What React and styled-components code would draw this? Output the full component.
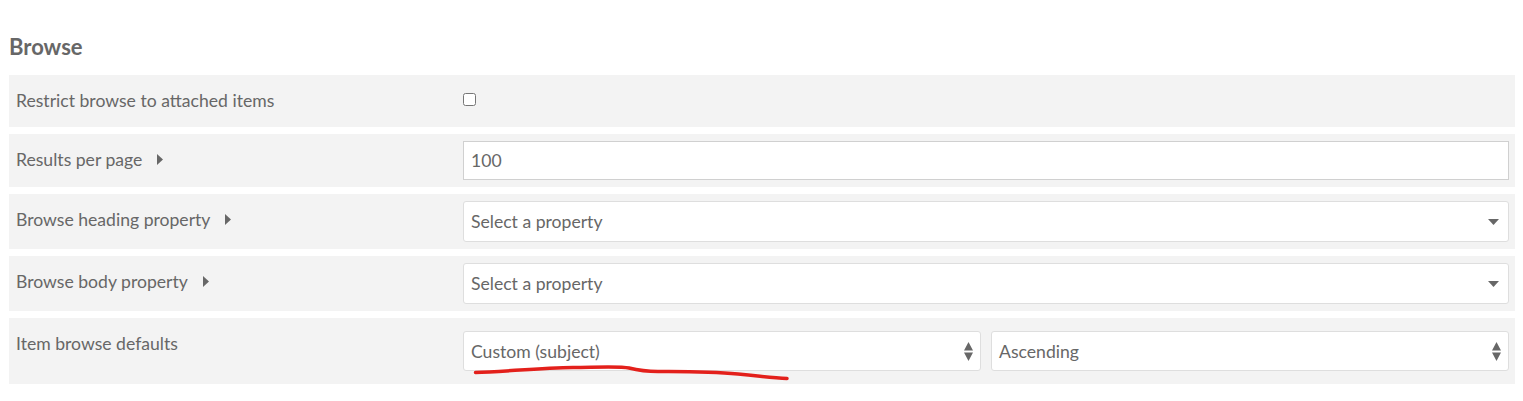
import React from "react"
import styled, { createGlobalStyle } from "styled-components"

const GlobalStyle = createGlobalStyle`
  html, body {
    margin: 0;
    padding: 0;
    background: #ffffff;
  }
  body {
    font-family: Lato, "Open Sans", sans-serif;
    color: #676767;
  }
`

const Page = styled.div`
  padding: 32px 8px 0 9px;
`

const Heading = styled.h2`
  margin: 0 0 13px;
  font-size: 22px;
  line-height: 30px;
  font-weight: 700;
  color: #676767;
`

const FieldList = styled.div`
  display: flex;
  flex-direction: column;
  gap: 7px;
`

const Field = styled.div`
  display: grid;
  grid-template-columns: 447px 1fr;
  background: #f3f3f3;
  padding: 7px 6px 7px 7px;
`

const Label = styled.div`
  box-sizing: border-box;
  display: flex;
  align-items: center;
  height: 38px;
  padding-bottom: 2px;
  font-size: 17.6px;
  color: #676767;
`

const Caret = styled.svg`
  margin-left: 15px;
  flex: none;
`

const Inputs = styled.div`
  display: flex;
  gap: 10px;
  min-width: 0;
`

const Checkbox = styled.input`
  display: block;
  width: 13px;
  height: 13px;
  margin: 11px 0 0;
`

const TextInput = styled.input`
  box-sizing: border-box;
  width: 100%;
  height: 39px;
  margin: 0;
  padding: 0 7px;
  border: 1px solid #d0d0d0;
  border-radius: 0;
  background: #fff;
  font-family: inherit;
  font-size: 17.6px;
  color: #676767;
  outline: none;
`

const SelectWrap = styled.div`
  position: relative;
  flex: 1 1 0;
  min-width: 0;
  margin: ${(p) => (p.$spaced ? "6px 0" : "0")};
`

const SelectBox = styled.div`
  box-sizing: border-box;
  display: flex;
  align-items: center;
  justify-content: space-between;
  height: ${(p) => p.$height}px;
  padding: 0 ${(p) => p.$arrowPad}px 0 7px;
  border: 1px solid #dedede;
  border-radius: 3px;
  background: #fff;
  font-size: 17.6px;
  color: #676767;
`

const Annotation = styled.svg`
  position: absolute;
  left: 0;
  top: 0;
  overflow: visible;
  pointer-events: none;
`

const RightCaret = () => (
  <Caret width="6" height="11" viewBox="0 0 6 11">
    <path d="M0 0 L6 5.5 L0 11 Z" fill="#676767" />
  </Caret>
)

const DownArrow = () => (
  <svg width="11" height="6" viewBox="0 0 11 6">
    <path d="M0 0 H11 L5.5 6 Z" fill="#676767" />
  </svg>
)

const UpDownArrow = () => (
  <svg width="9" height="19" viewBox="0 0 9 19">
    <path d="M4.5 0 L9 8.5 H0 Z" fill="#676767" />
    <path d="M0 10.5 H9 L4.5 19 Z" fill="#676767" />
  </svg>
)

const Select = ({ value, height = 41, sort, spaced, children }) => (
  <SelectWrap $spaced={spaced}>
    <SelectBox $height={height} $arrowPad={sort ? 7 : 9}>
      <span>{value}</span>
      {sort ? <UpDownArrow /> : <DownArrow />}
    </SelectBox>
    {children}
  </SelectWrap>
)

export default function App() {
  return (
    <Page>
      <GlobalStyle />
      <Heading>Browse</Heading>
      <FieldList>
        <Field>
          <Label>Restrict browse to attached items</Label>
          <Inputs>
            <Checkbox type="checkbox" />
          </Inputs>
        </Field>
        <Field>
          <Label>
            Results per page <RightCaret />
          </Label>
          <Inputs>
            <TextInput type="text" defaultValue="100" />
          </Inputs>
        </Field>
        <Field>
          <Label>
            Browse heading property <RightCaret />
          </Label>
          <Inputs>
            <Select value="Select a property" />
          </Inputs>
        </Field>
        <Field>
          <Label>
            Browse body property <RightCaret />
          </Label>
          <Inputs>
            <Select value="Select a property" />
          </Inputs>
        </Field>
        <Field>
          <Label>Item browse defaults</Label>
          <Inputs>
            <Select value="Custom (subject)" height={40} sort spaced>
              <Annotation width="330" height="50">
                <path
                  d="M12.5 41.5 C 40 40.5, 80 37, 110 36.5 S 158 35, 166 37 S 180 40.5, 195 40.5 S 245 40, 275 43 S 310 47, 324 47.5"
                  fill="none"
                  stroke="#e3201b"
                  strokeWidth="3.5"
                  strokeLinecap="round"
                />
              </Annotation>
            </Select>
            <Select value="Ascending" height={40} sort spaced />
          </Inputs>
        </Field>
      </FieldList>
    </Page>
  )
}
